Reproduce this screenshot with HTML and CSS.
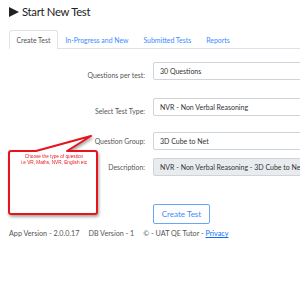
FILE: index.html
```html
<!DOCTYPE html>
<html>
<head>
<meta charset="utf-8">
<link rel="stylesheet" href="styles.css">
</head>
<body>
<div class="page">
  <h1 class="title">
    <svg class="play" width="10" height="10" viewBox="0 0 10 10"><path d="M0 0 L10 5 L0 10 Z" fill="#222"/></svg>
    <span>Start New Test</span>
  </h1>
  <ul class="tabs">
    <li class="tab active">Create Test</li>
    <li class="tab">In-Progress and New</li>
    <li class="tab">Submitted Tests</li>
    <li class="tab">Reports</li>
  </ul>
  <div class="form">
    <div class="row r1"><label class="lbl low">Questions per test:</label><div class="field">30 Questions</div></div>
    <div class="row r2"><label class="lbl low">Select Test Type:</label><div class="field">NVR - Non Verbal Reasoning</div></div>
    <div class="row r3"><label class="lbl">Question Group:</label><div class="field">3D Cube to Net</div></div>
    <div class="row r4"><label class="lbl">Description:</label><div class="field readonly">NVR - Non Verbal Reasoning - 3D Cube to Net</div></div>
    <div class="row r5"><span class="lbl"></span><button class="btn">Create Test</button></div>
  </div>
  <footer class="footer">
    <span>App Version - 2.0.0.17</span>
    <span>DB Version - 1</span>
    <span>© - UAT QE Tutor - <a class="link" href="#">Privacy</a></span>
  </footer>
  <div class="callout">
    <svg class="callout-shape" width="96" height="84" viewBox="0 0 96 84">
      <path d="M4 17 H29 L84 2 L60 17 H88 Q90 17 90 19 V78 Q90 80 88 80 H4 Q2 80 2 78 V19 Q2 17 4 17 Z" fill="#fff" stroke="#e8141c" stroke-width="2" stroke-linejoin="round"/>
    </svg>
    <div class="callout-text">Choose the type of question<br>i.e VR, Maths, NVR, English etc</div>
  </div>
</div>
</body>
</html>
```
FILE: styles.css
```css
html, body {
  margin: 0;
  padding: 0;
  background: #fff;
  overflow: hidden;
}
body {
  width: 300px;
  height: 300px;
  font-family: Lato, "Open Sans", sans-serif;
  color: #212529;
}
.page {
  position: relative;
  padding: 0 0 0 9px;
}
.title {
  display: flex;
  align-items: center;
  gap: 3px;
  margin: 0;
  padding-top: 6px;
  height: 12px;
  font-size: 11.3px;
  font-weight: 400;
  letter-spacing: -0.3px;
  line-height: 12px;
  color: #222;
}
.play {
  display: block;
  flex: none;
}
.tabs {
  display: flex;
  list-style: none;
  margin: 12px 0 0 0;
  padding: 0;
  border-bottom: 1px solid #dee2e6;
  height: 18px;
  width: 300px;
}
.tab {
  padding: 0 6.5px;
  font-size: 6.9px;
  line-height: 18px;
  color: #3d8bfd;
  border: 1px solid transparent;
  border-bottom: none;
  border-radius: 3px 3px 0 0;
  margin-bottom: -1px;
}
.tab.active {
  color: #555;
  border-color: #dee2e6;
  background: #fff;
  height: 18px;
}
.form {
  display: flex;
  flex-direction: column;
  margin-top: 13px;
}
.row {
  display: flex;
  align-items: center;
  gap: 8px;
}
.r2 { margin-top: 18px; }
.r3 { margin-top: 16px; }
.r4 { margin-top: 8px; }
.r5 { margin-top: 28px; }
.lbl {
  flex: none;
  width: 136px;
  text-align: right;
  font-size: 6.9px;
  line-height: 9px;
  color: #555;
}
.lbl.low {
  align-self: flex-end;
}
.field {
  flex: none;
  width: 170px;
  height: 16px;
  line-height: 16px;
  border: 1px solid #ced4da;
  border-radius: 2px;
  padding: 0 6px;
  font-size: 7px;
  color: #333;
  white-space: nowrap;
  overflow: hidden;
}
.field.readonly {
  background: #e9ecef;
}
.btn {
  flex: none;
  width: 57px;
  height: 20px;
  padding: 0;
  border: 1px solid #6aa5f8;
  border-radius: 2px;
  background: #fff;
  color: #3d8bfd;
  font-family: inherit;
  font-size: 8px;
}
.footer {
  display: flex;
  gap: 9px;
  margin-top: 5px;
  font-size: 7.2px;
  color: #555;
}
.link {
  color: #0d6efd;
}
.callout {
  position: absolute;
  left: 7px;
  top: 134px;
  width: 96px;
  height: 84px;
  filter: drop-shadow(1px 2px 1.5px rgba(0,0,0,0.35));
}
.callout-shape {
  display: block;
}
.callout-text {
  position: absolute;
  left: 2px;
  top: 20px;
  width: 90px;
  text-align: center;
  font-family: "Liberation Sans", Arial, sans-serif;
  font-size: 4.7px;
  line-height: 6px;
  color: #e8141c;
}
```
